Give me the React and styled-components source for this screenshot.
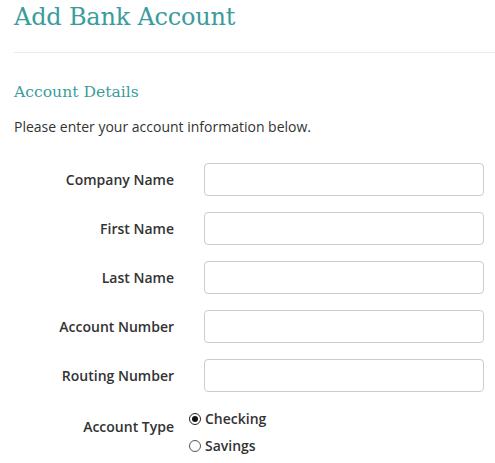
import React, { useState } from "react";
import styled, { createGlobalStyle } from "styled-components";

const GlobalStyle = createGlobalStyle`
  html, body {
    margin: 0;
    padding: 0;
    background: #fff;
  }
  body {
    font-family: "Open Sans", "Liberation Sans", sans-serif;
    color: #333;
  }
`;

const Page = styled.div`
  padding: 0 0 0 14px;
`;

const Title = styled.h1`
  margin: 0;
  padding-top: 2px;
  font-family: "DejaVu Serif", "Liberation Serif", serif;
  font-weight: 300;
  font-size: 24px;
  line-height: 30px;
  color: #3a9c9d;
  letter-spacing: -0.2px;
`;

const Divider = styled.hr`
  margin: 20px 0 0 0;
  border: 0;
  border-top: 1px solid #eaeaea;
`;

const SectionTitle = styled.h2`
  margin: 27px 0 0 0;
  font-family: "DejaVu Serif", "Liberation Serif", serif;
  font-weight: 300;
  font-size: 15.6px;
  line-height: 24px;
  color: #3a9c9d;
`;

const Intro = styled.p`
  margin: 13px 0 0 0;
  font-size: 14px;
  line-height: 20px;
  color: #333;
`;

const Form = styled.form`
  margin-top: 26px;
  display: flex;
  flex-direction: column;
  gap: 16px;
`;

const Row = styled.div`
  display: grid;
  grid-template-columns: 160px 280px;
  column-gap: 30px;
  align-items: ${(p) => (p.$top ? "start" : "center")};
`;

const Label = styled.label`
  text-align: right;
  font-size: 14px;
  font-weight: 600;
  color: #333;
  padding-top: ${(p) => (p.$top ? "9px" : "0")};
`;

const Input = styled.input`
  box-sizing: border-box;
  width: 280px;
  height: 33px;
  border: 1px solid #ccc;
  border-radius: 4px;
  padding: 6px 10px;
  font-size: 14px;
  font-family: inherit;
  outline: none;
`;

const Radios = styled.div`
  display: flex;
  flex-direction: column;
  gap: 6px;
  margin-left: -15px;
`;

const RadioLabel = styled.label`
  display: flex;
  align-items: center;
  gap: 4px;
  font-size: 14px;
  font-weight: 600;
  color: #333;
  line-height: 21px;
`;

const Radio = styled.input.attrs({ type: "radio" })`
  appearance: none;
  box-sizing: border-box;
  margin: 0;
  width: 12px;
  height: 12px;
  border: 1px solid #555;
  border-radius: 50%;
  background: #fff;
  display: grid;
  place-items: center;

  &:checked {
    border-color: #222;
  }
  &:checked::after {
    content: "";
    width: 6px;
    height: 6px;
    border-radius: 50%;
    background: #111;
  }
`;

const fields = [
  "Company Name",
  "First Name",
  "Last Name",
  "Account Number",
  "Routing Number",
];

export default function App() {
  const [type, setType] = useState("checking");

  return (
    <>
      <GlobalStyle />
      <Page>
        <Title>Add Bank Account</Title>
        <Divider />
        <SectionTitle>Account Details</SectionTitle>
        <Intro>Please enter your account information below.</Intro>
        <Form onSubmit={(e) => e.preventDefault()}>
          {fields.map((f) => (
            <Row key={f}>
              <Label>{f}</Label>
              <Input type="text" />
            </Row>
          ))}
          <Row $top>
            <Label $top>Account Type</Label>
            <Radios>
              <RadioLabel>
                <Radio
                  name="type"
                  checked={type === "checking"}
                  onChange={() => setType("checking")}
                />
                Checking
              </RadioLabel>
              <RadioLabel>
                <Radio
                  name="type"
                  checked={type === "savings"}
                  onChange={() => setType("savings")}
                />
                Savings
              </RadioLabel>
            </Radios>
          </Row>
        </Form>
      </Page>
    </>
  );
}
